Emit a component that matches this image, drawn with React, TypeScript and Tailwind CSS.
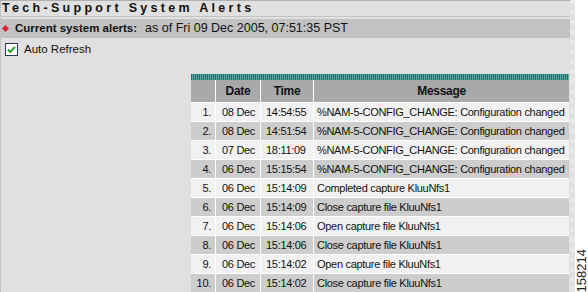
const rows = [
  ["1.", "08 Dec", "14:54:55", "%NAM-5-CONFIG_CHANGE: Configuration changed"],
  ["2.", "08 Dec", "14:51:54", "%NAM-5-CONFIG_CHANGE: Configuration changed"],
  ["3.", "07 Dec", "18:11:09", "%NAM-5-CONFIG_CHANGE: Configuration changed"],
  ["4.", "06 Dec", "15:15:54", "%NAM-5-CONFIG_CHANGE: Configuration changed"],
  ["5.", "06 Dec", "15:14:09", "Completed capture KluuNfs1"],
  ["6.", "06 Dec", "15:14:09", "Close capture file KluuNfs1"],
  ["7.", "06 Dec", "15:14:06", "Open capture file KluuNfs1"],
  ["8.", "06 Dec", "15:14:06", "Close capture file KluuNfs1"],
  ["9.", "06 Dec", "15:14:02", "Open capture file KluuNfs1"],
  ["10.", "06 Dec", "15:14:02", "Close capture file KluuNfs1"],
];

export default function App() {
  return (
    <div className="flex h-[292px] w-[588px] overflow-hidden bg-white font-['Liberation_Sans',Arial,sans-serif] text-[11px] text-[#111]">
      {/* main panel */}
      <div className="flex w-[575px] flex-col border-l border-dotted border-[#a8a8a8] border-r-[5px] border-r-[#e8e8e8] bg-[#e0e0e0]">
        <div className="h-[17px] border-t border-[#b0b0b0] border-b border-b-[#c4c4c4] pl-[1px] text-[12.5px] font-bold leading-[15px] tracking-[3.3px]">
          Tech-Support System Alerts
        </div>
        <div className="mt-[2px] flex h-[20px] items-center bg-[#c2c2c2] pl-[2px]">
          <span className="mr-[7px] inline-block h-[5px] w-[5px] rotate-45 bg-[#d6203a]" />
          <span className="text-[11.5px] font-bold">Current system alerts:</span>
          <span className="ml-[8px] text-[12.5px]">as of Fri 09 Dec 2005, 07:51:35 PST</span>
        </div>
        <div className="mt-[3px] flex items-center pl-[4px]">
          <svg width="13" height="13" viewBox="0 0 13 13" className="shrink-0">
            <rect x="0.5" y="0.5" width="12" height="12" fill="#fff" stroke="#2b3c5a" />
            <path d="M3 6.5 L5.3 9 L10 3.8" fill="none" stroke="#2aa22a" strokeWidth="2" />
          </svg>
          <span className="ml-[6px] text-[11.5px]">Auto Refresh</span>
        </div>
        <div className="ml-[190px] mt-[16px] w-[378px]">
          <div className="h-[6px] bg-[repeating-linear-gradient(90deg,#1e6e6e_0px,#1e6e6e_1px,#5fa9a4_1px,#5fa9a4_2px)]" />
          <div className="grid grid-cols-[24px_44px_52px_minmax(0,1fr)] gap-[1px] bg-white tracking-[-0.3px]">
            <div className="h-[22px] bg-[#a9a9a9]" />
            <div className="flex h-[22px] items-center justify-center bg-[#a9a9a9] text-[12px] font-bold">Date</div>
            <div className="flex h-[22px] items-center justify-center bg-[#a9a9a9] text-[12px] font-bold">Time</div>
            <div className="flex h-[22px] items-center justify-center bg-[#a9a9a9] text-[12px] font-bold">Message</div>
            {rows.map((r, i) => {
              const bg = i % 2 === 0 ? "bg-[#f1f1f1]" : "bg-[#cdcdcd]";
              return [
                <div key={i + "a"} className={`flex h-[18px] items-center justify-end pr-[4px] ${bg}`}>{r[0]}</div>,
                <div key={i + "b"} className={`flex h-[18px] items-center pl-[6px] ${bg}`}>{r[1]}</div>,
                <div key={i + "c"} className={`flex h-[18px] items-center pl-[5px] ${bg}`}>{r[2]}</div>,
                <div key={i + "d"} className={`flex h-[18px] items-center overflow-hidden whitespace-nowrap pl-[3px] ${bg}`}>{r[3]}</div>,
              ];
            })}
          </div>
        </div>
      </div>
      {/* figure number */}
      <div className="relative flex-1">
        <span className="absolute bottom-0 left-[2px] rotate-180 text-[13px] leading-[10px] text-[#222] [writing-mode:vertical-rl]">
          158214
        </span>
      </div>
    </div>
  );
}
